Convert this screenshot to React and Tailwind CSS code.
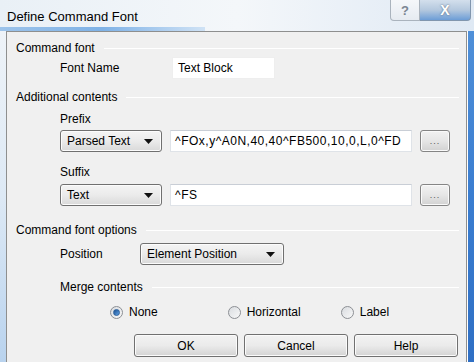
import { useState } from "react";

const font = { fontFamily: '"Liberation Sans", Arial, sans-serif' };

const GroupHeader = ({ label, className = "" }) => (
  <div className={`flex items-center h-[14px] ${className}`}>
    <span className="text-[12px] text-black whitespace-nowrap leading-none">{label}</span>
    <div className="flex-1 ml-[9px] h-px bg-[#c9c9c9] border-b border-white" />
  </div>
);

const Combo = ({ value, className = "" }) => (
  <div
    className={`h-[22px] flex items-center justify-between pl-[6px] pr-[8px] rounded-[3px] border border-[#707070] bg-gradient-to-b from-[#f4f4f4] via-[#ebebeb] to-[#d9d9d9] shadow-[inset_0_0_0_1px_#fcfcfc] ${className}`}
  >
    <span className="text-[12px] text-black leading-none">{value}</span>
    <svg width="9" height="5" viewBox="0 0 9 5">
      <path d="M0 0h9L4.5 5z" fill="#111" />
    </svg>
  </div>
);

const TextBox = ({ value, code = true, className = "" }) => (
  <div
    className={`h-[22px] flex items-center px-[4px] bg-white border border-[#dfe3e8] border-t-[#c9ced6] ${className}`}
  >
    <span
      className={`text-[12px] text-black leading-none whitespace-nowrap ${code ? "tracking-[0.5px]" : "pl-[1px]"}`}
    >
      {value}
    </span>
  </div>
);

const DotsButton = () => (
  <button className="w-[30px] h-[22px] rounded-[3px] border border-[#858585] bg-gradient-to-b from-[#f2f2f2] via-[#e6e6e6] to-[#d2d2d2] flex items-end justify-center pb-[5px] shadow-[inset_0_0_0_1px_#fafafa]">
    <span className="text-[9px] leading-none text-[#555] tracking-[1px]">...</span>
  </button>
);

const PushButton = ({ label }) => (
  <button className="w-[104px] h-[23px] rounded-[3px] border border-[#707070] bg-gradient-to-b from-[#f2f2f2] via-[#ebebeb] to-[#d3d3d3] shadow-[inset_0_0_0_1px_#fbfbfb] text-[12px] text-black leading-none">
    {label}
  </button>
);

const Radio = ({ checked, label, onClick, className = "" }) => (
  <label onClick={onClick} className={`flex items-center gap-[6px] cursor-default ${className}`}>
    <span className="w-[13px] h-[13px] rounded-full border border-[#8c8f94] bg-gradient-to-br from-[#d9dce0] to-[#f8f8f8] flex items-center justify-center">
      {checked && (
        <span className="w-[7px] h-[7px] rounded-full bg-gradient-to-br from-[#1b4f8f] to-[#5fa3e8] border border-[#2a5f9c]" />
      )}
    </span>
    <span className="text-[12px] text-black leading-none">{label}</span>
  </label>
);

export default function App() {
  const [merge, setMerge] = useState("none");

  return (
    <div
      style={font}
      className="w-[474px] h-[362px] overflow-hidden flex flex-col bg-gradient-to-r from-[#e9f0f6] via-[#f4f7fa] to-[#dfe9f4]"
    >
      {/* title bar */}
      <div className="h-[31px] flex items-start">
        <div className="flex-1 flex flex-col">
          <div className="h-[27px] flex items-center pl-[7px] pt-[6px]">
            <span className="text-[13px] text-black leading-none">Define Command Font</span>
          </div>
          <div className="w-[205px] h-[4px] bg-gradient-to-r from-[#9cc3ea] via-[#7fb2e6] to-[#cfe2f5]" />
        </div>
        <div className="flex h-[21px] mr-[3px]">
          <div className="w-[30px] h-[21px] rounded-bl-[4px] border border-t-0 border-[#aab3bd] bg-gradient-to-b from-[#f5f7fa] to-[#e6ebf1] flex items-center justify-center">
            <span className="text-[13px] font-bold text-[#7a8591] leading-none">?</span>
          </div>
          <div className="w-[51px] h-[21px] rounded-br-[4px] border border-l-0 border-t-0 border-[#8196ae] bg-gradient-to-b from-[#d3dfec] via-[#b4c8de] to-[#6c9dd6] flex items-center justify-center">
            <span className="text-[14px] font-bold text-white leading-none [text-shadow:0_0_2px_#4a5d75]">X</span>
          </div>
        </div>
      </div>

      {/* body */}
      <div className="flex-1 flex">
        <div className="w-[6px] bg-gradient-to-b from-[#eef3f8] via-[#dde9f5] to-[#b9d3ee]" />
        <div className="w-[461px] bg-[#f0f0f0] border border-[#8e8f8f] border-b-0 pl-[9px] pr-[7px] flex flex-col">
          <GroupHeader label="Command font" className="mt-[9px]" />

          <div className="flex items-center mt-[2px] h-[22px]">
            <span className="w-[156px] pl-[44px] text-[12px] text-black leading-none">Font Name</span>
            <TextBox value="Text Block" code={false} className="w-[103px] !border-[#eeeeee]" />
          </div>

          <GroupHeader label="Additional contents" className="mt-[11px]" />

          <div className="pl-[44px] mt-[8px] text-[12px] text-black leading-[14px]">Prefix</div>
          <div className="flex items-center mt-[4px] pl-[44px]">
            <Combo value="Parsed Text" className="w-[102px]" />
            <TextBox value="^FOx,y^A0N,40,40^FB500,10,0,L,0^FD" className="w-[242px] ml-[8px]" />
            <div className="ml-[8px]">
              <DotsButton />
            </div>
          </div>

          <div className="pl-[44px] mt-[13px] text-[12px] text-black leading-[14px]">Suffix</div>
          <div className="flex items-center mt-[5px] pl-[44px]">
            <Combo value="Text" className="w-[102px]" />
            <TextBox value="^FS" className="w-[242px] ml-[8px]" />
            <div className="ml-[8px]">
              <DotsButton />
            </div>
          </div>

          <GroupHeader label="Command font options" className="mt-[17px]" />

          <div className="flex items-center mt-[6px] pl-[44px] h-[22px]">
            <span className="w-[80px] text-[12px] text-black leading-none">Position</span>
            <Combo value="Element Position" className="w-[144px]" />
          </div>

          <GroupHeader label="Merge contents" className="mt-[15px] pl-[44px]" />

          <div className="flex items-center mt-[10px] h-[16px]">
            <Radio checked={merge === "none"} onClick={() => setMerge("none")} label="None" className="ml-[94px]" />
            <Radio checked={merge === "horizontal"} onClick={() => setMerge("horizontal")} label="Horizontal" className="ml-[70px]" />
            <Radio checked={merge === "label"} onClick={() => setMerge("label")} label="Label" className="ml-[40px]" />
          </div>

          <div className="flex mt-[14px] pl-[118px] gap-[6px]">
            <PushButton label="OK" />
            <PushButton label="Cancel" />
            <PushButton label="Help" />
          </div>
        </div>
        <div className="w-[1px] bg-[#ffffff]" />
        <div className="flex-1 bg-gradient-to-b from-[#4f8fd8] via-[#3a7dd0] to-[#2f6fc4]" />
      </div>
    </div>
  );
}
